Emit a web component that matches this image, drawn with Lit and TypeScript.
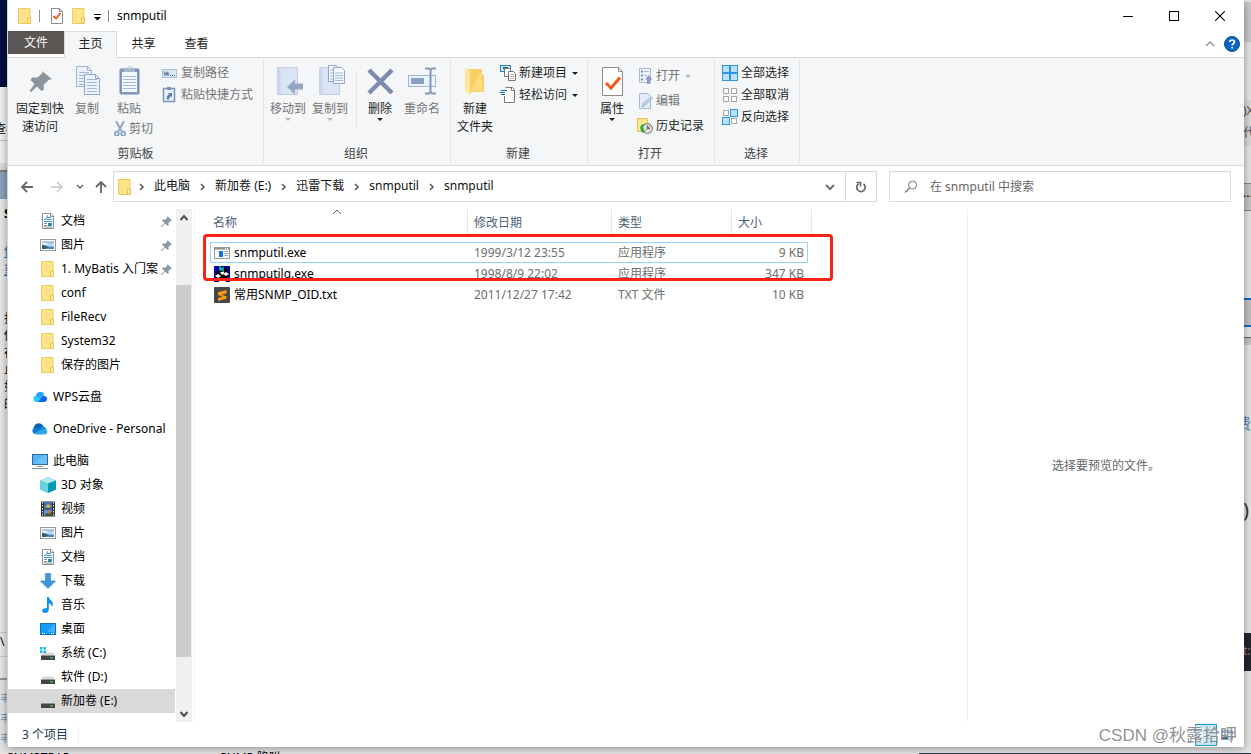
import { LitElement, html, svg, css, nothing, TemplateResult } from "lit";
import { customElement, property } from "lit/decorators.js";
import { classMap } from "lit/directives/class-map.js";

type Icon = TemplateResult;

const icon = (w: number, h: number, body: unknown, box = `0 0 ${w} ${h}`): Icon =>
  html`<svg width=${w} height=${h} viewBox=${box} fill="none" aria-hidden="true">${body}</svg>`;

/* ---------- small 16px icons ---------- */
const folder = icon(16, 16, svg`
  <path d="M1.5 .5h11.5v9.5h.5v5.5H1.5z" fill="#ffe28a" stroke="#eccb5a"/>
  <path d="M10.5 15.5v-5.5h3v5.5z" fill="#ffe9a6" stroke="#e8c145"/>`);
const docIcon = icon(16, 16, svg`
  <path d="M2.5 .5h8.5l2.5 2.500v12.500h-11z" fill="#fff" stroke="#8a8f94"/>
  <path d="M10.500 .5v3h3" stroke="#8a8f94"/>
  <path d="M4 6.500h2M7.500 2.500L6 6.500M7 4.500h4M7 6.500h5M4 8.500h8" stroke="#3794cf"/>
  <path d="M4 10.500h3M4 12.500h3M4 14h8" stroke="#7d8a96"/><rect x="8" y="10" width="4" height="3" fill="#3f82a8"/>`);
const picIcon = icon(16, 16, svg`
  <rect x=".5" y="2.500" width="15" height="11" fill="#fff" stroke="#9a9a9a"/>
  <rect x="2" y="4" width="12" height="8" fill="#9fc6ea"/>
  <path d="M2 6.500q3-2 5.500 0t6.500 0v2H2z" fill="#dcecf7"/>
  <path d="M2 8q4 0 6 1.500l6 1V12H2z" fill="#315f63"/><path d="M6 11q4-2 8-1v2H5z" fill="#4d83b5"/>`);
const wps = icon(16, 16, svg`
  <path d="M4.500 13a3.300 3.300 0 0 1-.5-6.500A4.500 4.500 0 0 1 11 4.500l3 5-4 3.500z" fill="#21d0f4"/>
  <path d="M4 7a4.500 4.500 0 0 1 8-2.500L9 10z" fill="#2ba1fb"/>
  <path d="M6 13l4.500-5.500Q13 6 14.800 8.500 16 12 12.500 13z" fill="#1562f0"/>`);
const oneDrive = icon(16, 16, svg`
  <path d="M2 9a5 5 0 0 1 9.500-3.500L9 10z" fill="#0364b8"/>
  <path d="M3 13A3.300 3.300 0 0 1 3.500 6.500q3-.5 5 1.500l4 5z" fill="#0f78d4"/>
  <path d="M2 12.500l8-4.500q2-1 4 .5a2.700 2.700 0 0 1-1 5H4z" fill="#28a8ea"/>
  <path d="M8 7l3.500-1.500q2.500.5 3 3L10 8.500z" fill="#1490df"/>`);
const pcIcon = icon(16, 16, svg`
  <rect x=".5" y="1.500" width="15" height="10" fill="#52b4f5" stroke="#2a6d9c"/>
  <path d="M1 11L12 2h3v9z" fill="#7cccfb" opacity=".6"/>
  <path d="M5 13.500h6M0 15.500h16" stroke="#8496a5"/>`);
const cube = icon(16, 16, svg`
  <path d="M0 3.500L8 0l8 3.500v9L8 16l-8-3.500z" fill="#22b3c6"/>
  <path d="M0 3.500L8 0l8 3.500L8 6.500z" fill="#b3eaf0"/>
  <path d="M0 3.500l8 3V16l-8-3.500z" fill="#66d3de"/><path d="M8 6.500l8-3v9L8 16z" fill="#079cb6"/>`);
const film = icon(16, 16, svg`
  <rect x="1" y=".5" width="14" height="15" fill="#333"/>
  <path d="M2.500 1v14M13.500 1v14" stroke="#eee" stroke-dasharray="1.500 1.500"/>
  <rect x="4" y="1" width="8" height="6.500" fill="#3476c9"/><rect x="4" y="8.500" width="8" height="6.500" fill="#5d92e0"/>
  <path d="M5 6l3-3 3 2-2 2z" fill="#e7b428"/><path d="M7 2h3v2z" fill="#d94630"/><path d="M4 15l3-3 2 1 3-3v5z" fill="#3d5c2e"/><circle cx="9" cy="11" r="1.500" fill="#d96d2c"/>`);
const down = icon(16, 16, svg`<path d="M5.500 .5h5v7.500h5L8 15.500.5 8h5z" fill="#3c96e2" stroke="#2b7ac0" stroke-width=".6"/>`);
const music = icon(16, 16, svg`
  <path d="M7 0h1.800q.5 2.500 2.500 3.700 2.700 2.500.7 6.300-.3-3-3.200-3.700v6.700q-.5 3-3.500 3T2 13.500q.5-2.500 5-2.500z" fill="#0b93f3"/>`);
const desk = icon(16, 16, svg`
  <rect x=".5" y="2.500" width="15" height="11" fill="#149cf8" stroke="#0a72bd"/>
  <path d="M2 12.500h1M4 12.500h1M11 12.500h1M13 12.500h1" stroke="#fff"/><path d="M7 11l7-8h1v8z" fill="#3db2ff"/>`);
const driveBody = svg`
  <path d="M3 6.500h10l2 3H1z" fill="#d5d7d8"/><rect x="1" y="9.500" width="14" height="4.500" rx=".5" fill="#444"/>
  <rect x="10.500" y="11" width="2" height="1.500" fill="#4de04d"/>`;
const drive = icon(16, 16, svg`<g transform="translate(0 1)">${driveBody}</g>`);
const sysDrive = icon(16, 16, svg`<g transform="translate(0 1)">${driveBody}</g>
  <path d="M0 2h2.500v2.500H0zM3.500 2H6v2.500H3.500zM0 5.500h2.500V8H0zM3.500 5.500H6V8H3.500z" fill="#15b8e8"/>`);
const pinSmall = icon(11, 11, svg`
  <path d="M6.500 0L11 4.500l-1.500.5-2 2 .2 2.500L6.500 10 4 7.500.8 11H0v-.8L3.500 7 1 4.500l.5-1 2.500.2L6 2z" fill="#8b99a6"/>`);
const propsSmall = icon(14, 16, svg`
  <path d="M1.500 .5h8l3 3v12h-11z" fill="#fff" stroke="#8a8a8a"/><path d="M9.500 .5v3h3" stroke="#8a8a8a"/>
  <path d="M3.500 8l2.500 2.500L10.500 5" stroke="#e8561c" stroke-width="1.800"/>`);

/* ---------- file icons ---------- */
const exeIcon = icon(16, 16, svg`
  <rect x=".5" y="2.500" width="15" height="11" fill="#fafafa" stroke="#9b9b9b"/><path d="M0 3.500h16" stroke="#8d8d8d" stroke-width="2"/>
  <path d="M11 3.500h1M13 3.500h1" stroke="#fff"/><rect x="5" y="6" width="4" height="6" fill="#0a78d6"/>
  <path d="M10.500 6.500h4M10.500 8.500h4M10.500 10.500h4" stroke="#a2a2a2"/>`);
const netIcon = icon(16, 16, svg`
  <rect width="16" height="16" fill="#0000a0"/><path d="M4 5l4-5 5 3 2 6-3 5H4L1 10z" fill="#000"/>
  <path d="M6 5V1l3 4V1" stroke="#12d0d0" stroke-width="1.300"/>
  <path d="M1 10l3-2 3 2-3 2zM9 8l3-2 3 2-3 2zM6 6h4v1L8 9zM5 13h6v-1l3 2-3 2H5z" fill="#fff"/>`);
const sublime = icon(16, 16, svg`
  <rect width="16" height="16" rx="1" fill="#474747"/>
  <path d="M12.500 3v3.200L7.500 7.800l5 1.500v2.500L4 14v-3l4.800-1.500L4 8V5.200z" fill="#ff9a12"/>`);

/* ---------- ribbon icons ---------- */
const pinBig = icon(32, 32, svg`
  <path d="M18 6l10 8-3.500 1-5 5 .5 4.500-2.500 1.500-4.500-4.500L7 27H6v-1.500L10.500 19l-4-4 1.500-2.500 5.500 0L18.500 8z" fill="#8a959e"/>`);
const lines = (x: number, y: number, w: number, n: number, step = 3) =>
  svg`<path d=${Array.from({ length: n }, (_, i) => `M${x} ${y + i * step}h${w}`).join("")} stroke="#a3b8d6"/>`;
const copyBig = icon(32, 32, svg`
  <path d="M5.500 1.500h11l4 4v16h-15z" fill="#eaf1fa" stroke="#9db2d0"/><path d="M16.500 1.500v4h4" stroke="#9db2d0"/>${lines(8, 7.5, 10, 5)}
  <path d="M13.500 9.500h11l4 4v16h-15z" fill="#eef4fb" stroke="#8fa6c8"/><path d="M24.500 9.500v4h4" stroke="#8fa6c8"/>${lines(16, 14.5, 10, 5)}`);
const pasteBig = icon(32, 32, svg`
  <rect x="7" y="4" width="19" height="25" rx="1" fill="#8299bd" stroke="#758caf"/><rect x="9" y="7" width="15" height="20" fill="#f1f6fc"/>
  ${lines(10, 11.5, 13, 5)}<path d="M11 3h3q2.500-4 5 0h3v4H11z" fill="#a9b7ca"/><circle cx="16.500" cy="2.500" r="1" fill="#fff"/>`);
const book = svg`<path d="M5.500 2.500h20v27h-20z" fill="#dae4f4" stroke="#c0cfe6"/><path d="M5.500 2.500h3v27h-3z" fill="#c9d7ec"/>`;
const moveBig = icon(32, 32, svg`${book}<path d="M31 18.500v6h-8v5L15 22l8-7.500v4z" fill="#94a6c4"/>`);
const copyToBig = icon(32, 32, svg`${book}
  <path d="M14.500 .5h8l3 3v13h-11z" fill="#f3f7fc" stroke="#8fa6c8"/>${lines(16, 5, 4, 4, 3)}
  <path d="M19.500 2.500h8l3 3v13h-11z" fill="#f3f7fc" stroke="#8fa6c8"/>${lines(21, 8, 8, 4, 2.5)}`);
const deleteBig = icon(32, 32, svg`<path d="M5 5l23 23M28 5L5 28" stroke="#7a8db0" stroke-width="4.500"/>`);
const renameBig = icon(32, 32, svg`
  <rect x="2.500" y="10.500" width="27" height="11" fill="#eaf2fb" stroke="#9db5d3"/><rect x="5" y="13" width="13" height="6" fill="#8ba1c3"/>
  <path d="M19 3.500h4l1.500 1.500 1.500-1.500h4M19 28.500h4l1.500-1.500 1.500 1.500h4M24.500 4v24" stroke="#8299bb" stroke-width="2"/>`);
const folderBig = icon(32, 32, svg`
  <path d="M9 4h14v6h2v17H9z" fill="#f7cf62"/><path d="M12 26l10-20 2 20z" fill="#ffe08a" opacity=".7"/>
  <path d="M6 3l6 4v19l-1 4-5-4z" fill="#ffe69c"/><path d="M11.500 8v20" stroke="#f1c95c" stroke-width=".8"/>`);
const propsBig = icon(32, 32, svg`
  <path d="M6.500 2.500h16l4 4v24h-20z" fill="#fdfdfd" stroke="#8c8c8c"/><path d="M22.500 2.500v4h4" stroke="#8c8c8c"/>
  <path d="M10 18l5 5 9-10.500" stroke="#f15a1c" stroke-width="3"/>`);
const cut = icon(12, 16, svg`
  <path d="M2 0l5.500 10M10 0l-5.500 10" stroke="#9aa9bf" stroke-width="2"/>
  <circle cx="2.800" cy="12.500" r="2" stroke="#7e9ac2" stroke-width="1.500"/><circle cx="9.200" cy="12.500" r="2" stroke="#7e9ac2" stroke-width="1.500"/>`);
const pathIcon = icon(16, 16, svg`
  <rect x=".5" y="4.500" width="14" height="8" fill="#dbe8f6" stroke="#a9bedb"/>
  <path d="M2 6.500l1 4 1-3 1 3M5 6.500l1 4 1-3" stroke="#5f779e"/><path d="M8 10.500h1M10 10.500h1M12 10.500h1" stroke="#4e668e"/>`);
const shortcut = icon(16, 16, svg`
  <rect x="1.500" y="1.500" width="11" height="13" fill="#e6effa" stroke="#7d94b9" stroke-width="1.500"/><path d="M5 0h4v3H5z" fill="#7f93b1"/>
  <path d="M4.500 12.500q0-4 2.500-5L6 6h4v4.500L9 9q-2 1-2 3.500z" fill="#6280ae"/>`);
const newItem = icon(16, 16, svg`
  <rect x=".5" y=".5" width="10" height="6" fill="#c5e4f7" stroke="#2f80b0"/><path d="M3 3h5" stroke="#31617e" stroke-width="2"/>
  <path d="M4.500 3.500h5l1 1v7h-6z" fill="#fff" stroke="#777"/><path d="M8.500 6.500h5l2 2v7h-7z" fill="#fff" stroke="#777"/>
  <path d="M10 9.500h4M10 11.500h4M10 13.500h4" stroke="#e0a6b0"/>`);
const easy = icon(16, 16, svg`
  <path d="M5.500 .5h7l2 2v13h-10V9" fill="#fff" stroke="#777"/><path d="M11.500 .5v3h3" stroke="#777"/>
  <path d="M1 3.500h6M0 5.500h5M1 7.500h4" stroke="#1769ad"/>`);
const openIcon = icon(16, 16, svg`
  <rect x="2.500" y=".5" width="11" height="14" fill="#edf3fb" stroke="#a9bad3"/><path d="M4 3.500h2M4 7.500h2M4 11.500h2" stroke="#7d92b6" stroke-width="2"/>
  <path d="M7 3.500h5M7 7.500h3" stroke="#a9bad3"/><path d="M11.500 7l4 4.500h-2.500V16h-3v-4.500H8z" fill="#8a9dbf"/>`);
const editIcon = icon(16, 16, svg`
  <path d="M2.500 .5h8l3 3v12h-11z" fill="#e4edf9" stroke="#a3b8d6"/><path d="M5 14l1-3.500 8-7 1.500 1.500-7.500 7.500z" fill="#c3d0e4" stroke="#97abc9" stroke-width=".7"/>`);
const historyIcon = icon(16, 16, svg`
  <path d="M.5 .5h10v13H.5z" fill="#ffe491" stroke="#e5c04c"/><circle cx="10.500" cy="10.500" r="5" fill="#ddd" stroke="#777"/>
  <path d="M10.500 7.500v3h2.500M13 8l-4 4" stroke="#666"/><path d="M3 8l1 5 2 2 2-1.500L6 10q0-3 3-4-5-.5-5.500 3z" fill="#2ca83a"/>`);
const squares = (on: boolean[]) => icon(16, 16, on.map((v, i) => {
  const x = (i % 2) * 8, y = Math.floor(i / 2) * 8;
  return v
    ? svg`<rect x=${x + 0.5} y=${y + 0.5} width="7" height="7" fill="#b9e1fb" stroke="#2b95e0"/>`
    : svg`<rect x=${x + 1.5} y=${y + 1.5} width="5" height="5" fill="#fff" stroke="#a6a6a6"/>`;
}));

/* ---------- chrome glyphs ---------- */
const tri = icon(6, 3, svg`<path d="M0 0h6L3 3z" fill="currentColor"/>`);
const chevron = (d: string, w = 10, h = 10, sw = 1.5) => icon(w, h, svg`<path d=${d} stroke="currentColor" stroke-width=${sw}/>`);
const arrow = (d: string) => icon(14, 14, svg`<path d=${d} stroke="currentColor" stroke-width="1.800"/>`);

const base = css`
  * { box-sizing: border-box; }
  svg { display: block; flex: none; }
  button, input { font: inherit; color: inherit; background: none; border: 0; padding: 0; margin: 0; }
  button { display: flex; align-items: center; }
`;

@customElement("ribbon-button")
class RibbonButton extends LitElement {
  @property({ attribute: false }) icon?: Icon;
  @property({ attribute: false }) lines: string[] = [];
  @property({ type: Boolean }) large = false;
  @property({ type: Boolean }) off = false;
  @property({ type: Boolean }) menu = false;
  static styles = [base, css`
    :host { display: block; }
    button { gap: 3px; height: 22px; line-height: 18px; color: #1e1e1e; white-space: nowrap; }
    button.off { color: #747474; }
    button.large { flex-direction: column; width: 100%; height: auto; gap: 0; padding-top: 3px; }
    .text { display: flex; flex-direction: column; align-items: center; padding-top: 3px; }
    .small-text { padding-bottom: 1px; }
    .caret { padding: 0 2px; }
    .off .caret { color: #b5b5b5; }
  `];
  render() {
    return html`<button class=${classMap({ large: this.large, off: this.off })} ?disabled=${this.off}>
      ${this.icon}
      <span class=${this.large ? "text" : "small-text"}>${this.large ? this.lines.map((l) => html`<span>${l}</span>`) : this.lines[0]}</span>
      ${this.menu ? html`<span class="caret">${tri}</span>` : nothing}
    </button>`;
  }
}

const big = (ic: Icon, text: string[], off = false, menu = false) =>
  html`<ribbon-button large .icon=${ic} .lines=${text} ?off=${off} ?menu=${menu}></ribbon-button>`;
const small = (ic: Icon, text: string, off = false, menu = false) =>
  html`<ribbon-button .icon=${ic} .lines=${[text]} ?off=${off} ?menu=${menu}></ribbon-button>`;

@customElement("explorer-ribbon")
class ExplorerRibbon extends LitElement {
  static styles = [base, css`
    :host { display: flex; background: #f4f6f8; border: solid #dadbdc; border-width: 1px 0; height: 109px; padding: 2px 0 2px; }
    section { display: flex; flex-direction: column; border-right: 1px solid #e0e2e4; }
    .body { display: flex; flex: 1; padding-top: 2px; }
    h2 { margin: 0; font-size: 12px; font-weight: 400; line-height: 18px; text-align: center; color: #444; }
    .w64 { width: 64px; } .w54 { width: 54px; } .w42 { width: 42px; } .w30 { width: 30px; }
    .cut { padding-left: 12px; }
    .col { display: flex; flex-direction: column; }
    .loose { gap: 3px; padding-top: 3px; }
    .clip { width: 256px; } .org { width: 187px; padding-left: 3px; } .new { width: 137px; padding-left: 3px; }
    .open { width: 127px; padding-left: 3px; } .sel { width: 85px; padding-left: 7px; }
    .org h2, .new h2, .open h2 { padding-right: 5px; }
    .sel h2 { padding-right: 9px; }
    .clip .links { padding-left: 6px; } .new .links, .open .links { padding-left: 4px; }
    .rule { width: 1px; height: 56px; margin: 9px 2px 0 5px; background: #e0e2e4; }
  `];
  render() {
    return html`
      <section class="clip"><div class="body">
        <div class="w64">${big(pinBig, ["固定到快", "速访问"])}</div>
        <div class="w30">${big(copyBig, ["复制"], true)}</div>
        <div class="w54">${big(pasteBig, ["粘贴"], true)}<div class="cut">${small(cut, "剪切", true)}</div></div>
        <div class="col links">${small(pathIcon, "复制路径", true)}${small(shortcut, "粘贴快捷方式", true)}</div>
      </div><h2>剪贴板</h2></section>
      <section class="org"><div class="body">
        <div class="w42">${big(moveBig, ["移动到"], true, true)}</div>
        <div class="w42">${big(copyToBig, ["复制到"], true, true)}</div>
        <div class="rule"></div>
        <div class="w42">${big(deleteBig, ["删除"], false, true)}</div>
        <div class="w42">${big(renameBig, ["重命名"], true)}</div>
      </div><h2>组织</h2></section>
      <section class="new"><div class="body">
        <div class="w42">${big(folderBig, ["新建", "文件夹"])}</div>
        <div class="col links">${small(newItem, "新建项目", false, true)}${small(easy, "轻松访问", false, true)}</div>
      </div><h2>新建</h2></section>
      <section class="open"><div class="body">
        <div class="w42">${big(propsBig, ["属性"], false, true)}</div>
        <div class="col links loose">${small(openIcon, "打开", true, true)}${small(editIcon, "编辑", true)}${small(historyIcon, "历史记录")}</div>
      </div><h2>打开</h2></section>
      <section class="sel"><div class="body"><div class="col">
        ${small(squares([true, true, true, true]), "全部选择")}
        ${small(squares([false, false, false, false]), "全部取消")}
        ${small(squares([false, true, true, false]), "反向选择")}
      </div></div><h2>选择</h2></section>`;
  }
}

interface NavItem { icon: Icon; label: string; top?: boolean; pinned?: boolean; active?: boolean; }
const navItems: NavItem[] = [
  { icon: docIcon, label: "文档", pinned: true },
  { icon: picIcon, label: "图片", pinned: true },
  { icon: folder, label: "1. MyBatis 入门案", pinned: true },
  { icon: folder, label: "conf" },
  { icon: folder, label: "FileRecv" },
  { icon: folder, label: "System32" },
  { icon: folder, label: "保存的图片" },
  { icon: wps, label: "WPS云盘", top: true },
  { icon: oneDrive, label: "OneDrive - Personal", top: true },
  { icon: pcIcon, label: "此电脑", top: true },
  { icon: cube, label: "3D 对象" },
  { icon: film, label: "视频" },
  { icon: picIcon, label: "图片" },
  { icon: docIcon, label: "文档" },
  { icon: down, label: "下载" },
  { icon: music, label: "音乐" },
  { icon: desk, label: "桌面" },
  { icon: sysDrive, label: "系统 (C:)" },
  { icon: drive, label: "软件 (D:)" },
  { icon: drive, label: "新加卷 (E:)", active: true },
];

@customElement("nav-tree")
class NavTree extends LitElement {
  static styles = [base, css`
    :host { display: flex; width: 184px; flex: none; }
    ul { list-style: none; margin: 0; padding: 0; flex: 1; min-width: 0; }
    li { margin-right: 1px; }
    li.top { margin-top: 8px; }
    a { display: flex; align-items: center; gap: 5px; height: 24px; padding: 0 3px 0 32px; color: #000; text-decoration: none; }
    .top a { padding-left: 24px; padding-right: 0; }
    .active { background: #d9d9d9; }
    .label { flex: 1; min-width: 0; overflow: hidden; white-space: nowrap; line-height: 20px; padding-bottom: 1px; }
    .pinned .label { margin-right: -5px; }
    .bar { width: 16px; background: #f0f0f0; display: flex; flex-direction: column; align-items: center; color: #505050; }
    .bar button { height: 17px; }
    .track { flex: 1; width: 15px; margin-right: 1px; display: flex; flex-direction: column; }
    .before { flex: 59; } .thumb { flex: 373; background: #cdcdcd; } .after { flex: 48; }
  `];
  render() {
    return html`<ul>${navItems.map((n) => html`
        <li class=${classMap({ top: !!n.top, pinned: !!n.pinned, active: !!n.active })}>
          <a href="#">${n.icon}<span class="label">${n.label}</span>${n.pinned ? pinSmall : nothing}</a>
        </li>`)}</ul>
      <div class="bar">
        <button aria-label="向上滚动">${chevron("M1.500 7l3.500-4 3.500 4", 10, 10, 2)}</button>
        <div class="track"><div class="before"></div><div class="thumb"></div><div class="after"></div></div>
        <button aria-label="向下滚动">${chevron("M1.500 3l3.500 4 3.500-4", 10, 10, 2)}</button>
      </div>`;
  }
}

const files = [
  { icon: exeIcon, name: "snmputil.exe", date: "1999/3/12 23:55", type: "应用程序", size: "9 KB" },
  { icon: netIcon, name: "snmputilg.exe", date: "1998/8/9 22:02", type: "应用程序", size: "347 KB" },
  { icon: sublime, name: "常用SNMP_OID.txt", date: "2011/12/27 17:42", type: "TXT 文件", size: "10 KB" },
];

@customElement("file-list")
class FileList extends LitElement {
  static styles = [base, css`
    :host { display: block; flex: 1; min-width: 0; margin-left: 2px; padding-left: 15px; border-left: 1px solid #f6f6f6; position: relative; }
    table { border-collapse: separate; border-spacing: 0; table-layout: fixed; width: 602px; }
    th { height: 28px; padding: 0 0 0 6px; text-align: left; font-weight: 400; color: #4c607a; border-right: 1px solid #e5e5e5; position: relative; }
    th.name { padding-left: 3px; }
    th.size { border-right: 0; }
    th.end { padding: 0; }
    .sort { position: absolute; left: 122px; top: -1px; color: #666; }
    .c1 { width: 258px; } .c2 { width: 144px; } .c3 { width: 120px; } .c4 { width: 76px; } .c5 { width: 4px; }
    .gap td { height: 5px; border: 0; padding: 0; }
    td { height: 21px; padding: 0 0 0 6px; color: #6d6d6d; line-height: 19px; white-space: nowrap; }
    td.name { padding-left: 4px; color: #000; }
    td.size { text-align: right; padding: 0 4px 0 0; }
    .file { display: flex; align-items: center; gap: 4px; height: 19px; }
    .focus td { border: solid #99d1ff; border-width: 1px 0; }
    .focus td.name { border-left-width: 1px; padding-left: 3px; }
    .focus td.size { border-right-width: 1px; padding-right: 3px; }
    .focus td.end { border: 0; }
    .mark { position: absolute; left: 8px; top: 25px; width: 630px; height: 47px; border: 3px solid #fb2116; border-radius: 4px; }
  `];
  render() {
    return html`<table>
      <colgroup><col class="c1"><col class="c2"><col class="c3"><col class="c4"><col class="c5"></colgroup>
      <thead><tr>
        <th class="name">名称<span class="sort">${chevron("M1 6l4-4 4 4", 10, 8, 1)}</span></th>
        <th>修改日期</th><th>类型</th><th class="size">大小</th><th class="end"></th>
      </tr></thead>
      <tbody><tr class="gap"><td colspan="5"></td></tr>
        ${files.map((f, i) => html`<tr class=${i ? "" : "focus"}>
          <td class="name"><span class="file">${f.icon}${f.name}</span></td>
          <td>${f.date}</td><td>${f.type}</td><td class="size">${f.size}</td><td class="end"></td></tr>`)}
      </tbody></table>
      <div class="mark"></div>`;
  }
}

@customElement("app-root")
class AppRoot extends LitElement {
  static styles = [base, css`
    :host { display: block; position: relative; height: 100vh; overflow: hidden; background: #e6e6e6;
      font: 12px/18px "Noto Sans", "Noto Sans CJK SC", sans-serif; color: #000; }
    .behind { position: absolute; inset: 0; overflow: hidden; }
    .behind > * { position: absolute; white-space: nowrap; }
    .l { left: 0; width: 8px; overflow: hidden; }
    .r { right: 0; width: 8px; overflow: hidden; }
    .navy { top: 0; height: 87px; background: #00103f; }
    .pale { top: 87px; height: 84px; background: linear-gradient(#f4f4f4 53px, #999 53px, #f4f4f4 54px, #f4f4f4 76px, #dedede 76px); }
    .menu { top: 120px; text-indent: -6px; }
    .steel { top: 170px; height: 29px; background: #8da4c0; border-top: 2px solid #7c7c7c; }
    .page { top: 199px; height: 480px; background: #ebebeb; }
    .s, .link, .para { padding-left: 4px; }
    .s { top: 204px; font-weight: 700; font-size: 13px; }
    .link { top: 243px; color: #1477c8; text-decoration: underline; }
    .para { top: 310px; line-height: 17px; white-space: pre; }
    .slash { top: 632px; height: 25px; border: solid #ccc; border-width: 1px 0; }
    .edge { top: 678px; height: 2px; background: #999; }
    .cells { top: 688px; color: #6e93ba; line-height: 20px; white-space: pre; font-size: 10px; }
    .tabs-r { top: 2px; height: 40px; background: #c9cacd; }
    .fx { top: 100px; height: 46px; background: #dadada; color: #555; line-height: 22px; white-space: pre; }
    .dots { top: 183px; height: 28px; background: #c6c6c6; border: solid #888; border-width: 1px 0; }
    .box { top: 298px; height: 29px; background: #c2c2c2; border: solid #0a6fc4; border-width: 2px 0; }
    .shade { top: 337px; height: 8px; background: linear-gradient(#666 1px, #bbb 1px, #ccc); }
    .fee { top: 414px; color: #5287b5; font-size: 15px; text-indent: -7px; }
    .paren { top: 498px; font-size: 20px; line-height: 24px; color: #333; }
    .dark { top: 633px; height: 38px; background: #202530; color: #b9856e; line-height: 36px; }
    .strip { left: 0; right: 0; bottom: 0; height: 7px; background: #e5e5e5; }
    .row1 { left: 7px; top: 749px; } .row2 { left: 220px; top: 749px; }
    .base { left: 919px; right: 0; bottom: 0; height: 1px; background: #333a46; }

    .window { position: relative; display: flex; flex-direction: column; height: calc(100vh - 7px); margin: 0 7px;
      background: #fff; border-left: 1px solid #d4d4d4; box-shadow: 0 1px 9px rgba(0, 0, 0, .4); }
    .title { display: flex; align-items: center; height: 31px; padding: 0 1px 0 9px; }
    .quick { display: flex; align-items: center; gap: 7px; flex: 1; }
    .quick i { width: 1px; height: 12px; background: #8e8e8e; }
    .quick .first { margin: 0 3px 0 -1px; }
    .quick .more { padding-top: 3px; }
    .caption { line-height: 20px; margin-left: 1px; }
    h1 { margin: 0; font-size: 12px; font-weight: 400; }
    .sys { display: flex; }
    .sys button { width: 46px; height: 31px; justify-content: center; }
    .tabs { display: flex; height: 27px; align-items: stretch; padding-right: 2px; margin-bottom: -1px; position: relative; }
    .tabs button { width: 53px; justify-content: center; padding-bottom: 2px; color: #222; }
    .tabs .file { width: 56px; height: 23px; background: #595653; color: #fff; padding: 0; }
    .tabs .on { background: #f4f6f8; border: 1px solid #dadbdc; border-bottom: 0; }
    .space { flex: 1; }
    .tabs .up { width: 24px; color: #999; }
    .tabs .help { width: 20px; }

    .address { display: flex; align-items: center; height: 43px; padding: 5px 13px 7px 12px; color: #5a5a5a; }
    .hist { color: #666; margin-right: 10px; }
    .parent { color: #666; margin-right: 5px; }
    .back { color: #666; margin-right: 16px; } .fwd { color: #d2d2d2; margin-right: 12px; }
    .path { display: flex; align-items: center; flex: 1; height: 31px; border: 1px solid #d9d9d9; padding-left: 3px; margin-right: 12px; }
    .path nav { display: flex; align-items: center; flex: 1; gap: 8px; }
    .path nav > svg { margin-right: -4px; }
    .path a { color: #111; text-decoration: none; line-height: 20px; padding-bottom: 1px; }
    .path .drop { width: 31px; justify-content: center; color: #707070; }
    .path .reload { width: 31px; height: 29px; justify-content: center; border-left: 1px solid #d9d9d9; }
    .search { display: flex; align-items: center; gap: 12px; width: 342px; height: 31px; border: 1px solid #d9d9d9; padding: 0 14px; }
    .search input { flex: 1; min-width: 0; outline: 0; }
    .search input::placeholder { color: #666; opacity: 1; }

    main { display: flex; flex: 1; min-height: 0; padding-bottom: 1px; }
    .preview { flex: 0 0 277px; border-left: 1px solid #f0f0f0; display: flex; align-items: center; justify-content: center; color: #666; }
    .preview p { margin: 0; }
    footer { display: flex; align-items: center; height: 24px; padding: 0 7px 0 14px; color: #26395a; }
    footer span { padding-right: 10px; border-right: 1px solid #eee; }
    .views { display: flex; margin-left: auto; }
    .views button { width: 20px; height: 22px; justify-content: center; }
    .views .on { width: 22px; background: #c0e6f8; border: 1px solid #2a98cf; }
    .credit { position: absolute; right: 14px; bottom: 6px; font: 17px/24px "Liberation Sans", "Noto Sans CJK SC", sans-serif; color: rgba(125, 125, 125, .85);
      text-shadow: -1px -1px 0 rgba(255, 255, 255, .7); white-space: nowrap; }
  `];
  render() {
    const sep = html`<span>${chevron("M3 2l3 3-3 3", 9, 10, 1.5)}</span>`;
    return html`
      <div class="behind" aria-hidden="true">
        <div class="l navy"></div><div class="l pale"></div><div class="l menu">查看</div><div class="l steel"></div>
        <div class="l page"></div><div class="l s">S</div><div class="l link">你<br>重</div>
        <div class="l para">${"扫\n你\n在\n止\n如\n的"}</div><div class="l slash">\\</div><div class="l edge"></div><div class="l cells">${"丰\n丰\n丰"}</div>
        <div class="r tabs-r"></div><div class="r fx">${")X\n代"}</div><div class="r dots">...</div><div class="r box"></div>
        <div class="r shade"></div><div class="r fee">费</div><div class="r paren">)</div><div class="r dark">t:</div>
        <div class="strip"></div><div class="row1">SNMPTRAP</div><div class="row2">SNMP 陷阱</div><div class="base"></div>
      </div>
      <div class="window">
        <header class="title">
          <div class="quick">${folder}<i class="first"></i>${propsSmall}${folder}
            <button class="more" aria-label="自定义快速访问工具栏">${icon(7, 7, svg`<path d="M0 .5h7" stroke="#000"/><path d="M0 3h7L3.500 6.500z" fill="#000"/>`)}</button>
            <i></i><h1 class="caption">snmputil</h1></div>
          <div class="sys">
            <button aria-label="最小化">${icon(10, 10, svg`<path d="M0 5.500h10" stroke="#000"/>`)}</button>
            <button aria-label="最大化">${icon(10, 10, svg`<rect x=".5" y=".5" width="9" height="9" stroke="#000"/>`)}</button>
            <button aria-label="关闭">${icon(10, 10, svg`<path d="M0 0l10 10M10 0L0 10" stroke="#000" stroke-width="1.100"/>`)}</button>
          </div>
        </header>
        <div class="tabs">
          <button class="file">文件</button><button class="on">主页</button><button>共享</button><button>查看</button>
          <span class="space"></span>
          <button class="up" aria-label="折叠功能区">${chevron("M1 7l4-4 4 4")}</button>
          <button class="help" aria-label="帮助">${icon(16, 16, svg`<circle cx="8" cy="8" r="7.500" fill="#0a66c2" stroke="#084f97"/>
            <path d="M5.800 6q.2-2 2.300-2t2.300 1.900q0 1.100-1.200 1.800-1 .6-1 1.800M8.200 11v1.600" stroke="#fff" stroke-width="1.700"/>`)}</button>
        </div>
        <explorer-ribbon></explorer-ribbon>
        <div class="address">
          <button class="back" aria-label="后退">${arrow("M13 7H2M7 2L2 7l5 5")}</button>
          <button class="fwd" aria-label="前进" disabled>${arrow("M1 7h11M7 2l5 5-5 5")}</button>
          <button class="hist" aria-label="最近的位置">${chevron("M1 2l3 3 3-3", 8, 7)}</button>
          <button class="parent" aria-label="上移">${arrow("M7 13V2M2 7l5-5 5 5")}</button>
          <div class="path">
            <nav>${folder}${sep}<a href="#">此电脑</a>${sep}<a href="#">新加卷 (E:)</a>${sep}<a href="#">迅雷下载</a>${sep}<a href="#">snmputil</a>${sep}<a href="#">snmputil</a></nav>
            <button class="drop" aria-label="以前的位置">${chevron("M1 3l4 4 4-4", 10, 10, 2)}</button>
            <button class="reload" aria-label="刷新">${icon(12, 12, svg`<path d="M8.500 3A4.200 4.200 0 1 1 3.700 2.800" stroke="#666" stroke-width="1.700"/><path d="M1.500 1.500h4v4" stroke="#666" stroke-width="1.500"/>`)}</button>
          </div>
          <label class="search">${icon(14, 14, svg`<circle cx="8.500" cy="5" r="4" stroke="#777"/><path d="M5.500 8L1 12.500" stroke="#777" stroke-width="1.200"/>`)}
            <input type="search" aria-label="搜索" placeholder="在 snmputil 中搜索"></label>
        </div>
        <main>
          <nav-tree></nav-tree><file-list></file-list>
          <aside class="preview"><p>选择要预览的文件。</p></aside>
        </main>
        <footer><span>3 个项目</span>
          <div class="views">
            <button class="on" aria-label="详细信息">${icon(16, 16, svg`<path d="M2 2.500h3M2 5.500h3M2 8.500h3M2 11.500h3M2 14.500h3" stroke="#fff" stroke-width="2"/><path d="M7 2.500h7M7 5.500h7M7 8.500h7M7 11.500h7" stroke="#93aabb"/><path d="M3 11.500h1" stroke="#c33"/>`)}</button>
            <button aria-label="大图标">${icon(12, 12, svg`<rect x=".5" y="1.500" width="11" height="9" fill="#cfe3f8" stroke="#8ba6c6"/><path d="M1 2.500h10" stroke="#3f7be0" stroke-width="2"/><path d="M1 6h6v4H1z" fill="#355d70"/>`)}</button>
          </div>
        </footer>
      </div>
      <div class="credit">CSDN @秋露拾呷</div>`;
  }
}
